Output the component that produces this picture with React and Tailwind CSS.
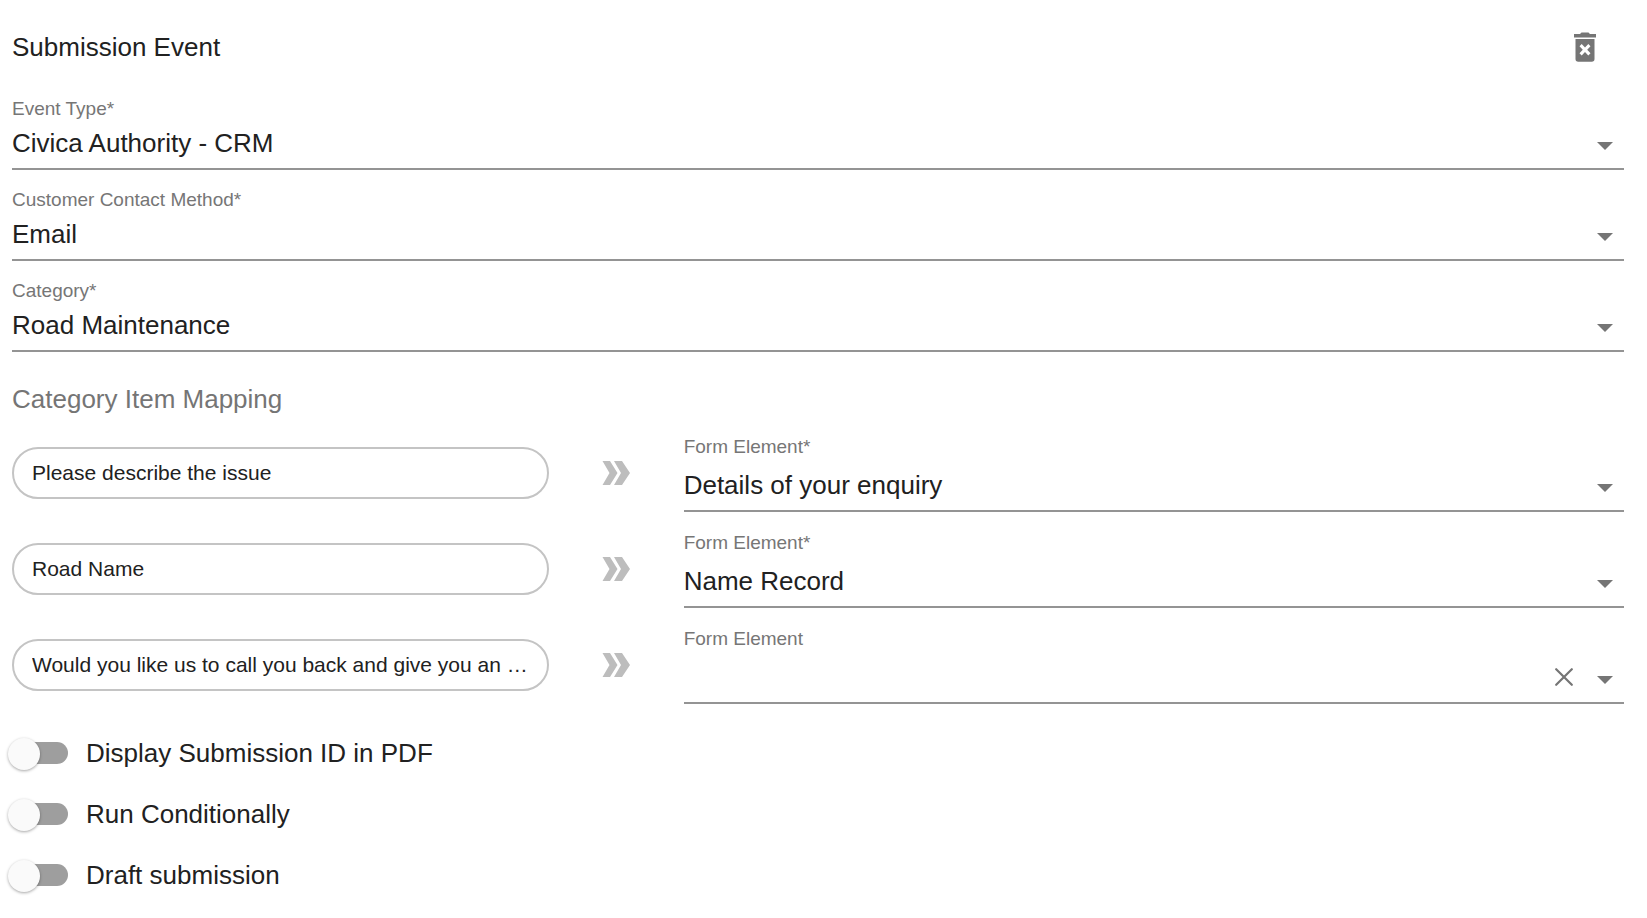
import { useState } from 'react';

const fields = [
  { id: 'event-type', label: 'Event Type*', value: 'Civica Authority - CRM' },
  { id: 'contact-method', label: 'Customer Contact Method*', value: 'Email' },
  { id: 'category', label: 'Category*', value: 'Road Maintenance' }
];

const mappings = [
  { id: 'issue', item: 'Please describe the issue', label: 'Form Element*', value: 'Details of your enquiry' },
  { id: 'road', item: 'Road Name', label: 'Form Element*', value: 'Name Record' },
  {
    id: 'callback',
    item: 'Would you like us to call you back and give you an …',
    label: 'Form Element',
    value: '',
    clearable: true
  }
];

const options = [
  { id: 'submission-id', label: 'Display Submission ID in PDF' },
  { id: 'conditional', label: 'Run Conditionally' },
  { id: 'draft', label: 'Draft submission' }
];

function SelectField({ id, label, value, clearable, className = '' }) {
  const [current, setCurrent] = useState(value);

  return (
    <div className={`flex flex-col border-b-2 border-[#949494] ${className}`}>
      <label htmlFor={id} className="self-start text-[19px] leading-[26px] text-[#767676]">
        {label}
      </label>
      <div className="flex items-center">
        <select
          id={id}
          value={current}
          onChange={(e) => setCurrent(e.target.value)}
          className="h-[46px] min-w-0 flex-1 appearance-none bg-transparent pb-1 text-[26px] leading-8 text-[#212121] focus:outline-none"
        >
          <option value=""></option>
          {value && <option value={value}>{value}</option>}
        </select>
        {clearable && (
          <button type="button" aria-label="Clear" onClick={() => setCurrent('')} className="mr-6 mb-1">
            <svg className="h-[18px] w-[18px]" viewBox="0 0 18 18" fill="none" stroke="#757575" strokeWidth="2.2" strokeLinecap="round">
              <path d="M1.2 1.2l15.6 15.6M16.8 1.2L1.2 16.8" />
            </svg>
          </button>
        )}
        <svg className="pointer-events-none mt-0.5 mr-[11px] h-2 w-4" viewBox="0 0 16 8" fill="#757575">
          <path d="M0 0h16L8 8z" />
        </svg>
      </div>
    </div>
  );
}

function DoubleArrow() {
  return (
    <svg className="h-6 w-7" viewBox="0 0 28 24" fill="#bdbdbd">
      <path d="M0.500 0h7.500l7.500 12L8 24H0.500L7.500 12z" />
      <path d="M12 0h8l8 12-8 12h-8l7-12z" />
    </svg>
  );
}

function Toggle({ id, label }) {
  const [on, setOn] = useState(false);

  return (
    <div className="flex h-[61px] items-center gap-[18px]">
      <input
        id={id}
        type="checkbox"
        role="switch"
        checked={on}
        onChange={() => setOn(!on)}
        className="relative h-[22px] w-14 appearance-none rounded-full bg-[#9e9e9e] before:absolute before:-left-1 before:-top-1 before:h-8 before:w-8 before:rounded-full before:bg-[#fafafa] before:shadow-[0_1px_3px_rgba(0,0,0,0.35)] checked:before:left-7"
      />
      <label htmlFor={id} className="text-[26px] leading-8 text-[#212121]">
        {label}
      </label>
    </div>
  );
}

export default function App() {
  return (
    <main className="min-h-screen bg-white pt-[27px] pr-[23px] pb-3 pl-3 font-['Liberation_Sans',Arial,sans-serif]">
      <header className="flex items-center justify-between pr-7">
        <h1 className="text-[26px] leading-10 text-[#212121]">Submission Event</h1>
        <button type="button" aria-label="Delete submission event">
          <svg className="h-[30px] w-[22px]" viewBox="0 0 22 30" fill="#757575">
            <path d="M0 2h6l1.500-1.500h7L16 2h6v3.500H0z" />
            <path
              fillRule="evenodd"
              d="M1.500 7h19v20a2.800 2.800 0 0 1-2.800 2.800H4.300a2.800 2.800 0 0 1-2.800-2.800zM7.700 12L5.500 14.200l3.300 3.500-3.300 3.500 2.200 2.200 3.300-3.400 3.300 3.400 2.200-2.200-3.300-3.500 3.300-3.500-2.200-2.200L11 15.400z"
            />
          </svg>
        </button>
      </header>

      <section className="mt-[29px] flex flex-col gap-[17px]">
        {fields.map((field) => (
          <SelectField key={field.id} {...field} />
        ))}
      </section>

      <h2 className="mt-[27px] text-[26px] leading-10 text-[#757575]">Category Item Mapping</h2>

      <section className="mt-[15px] flex flex-col gap-[18px]">
        {mappings.map(({ item, ...mapping }) => (
          <div
            key={mapping.id}
            className="grid grid-cols-[minmax(0,4fr)_minmax(0,1fr)_minmax(0,7fr)] items-center"
          >
            <div className="rounded-[26px] border-2 border-[#c4c4c4] px-[18px]">
              <p className="truncate text-[21px] leading-[48px] text-[#212121]">{item}</p>
            </div>
            <div className="flex justify-center">
              <DoubleArrow />
            </div>
            <SelectField {...mapping} className="gap-1" />
          </div>
        ))}
      </section>

      <section className="mt-[18px]">
        {options.map((option) => (
          <Toggle key={option.id} {...option} />
        ))}
      </section>
    </main>
  );
}
